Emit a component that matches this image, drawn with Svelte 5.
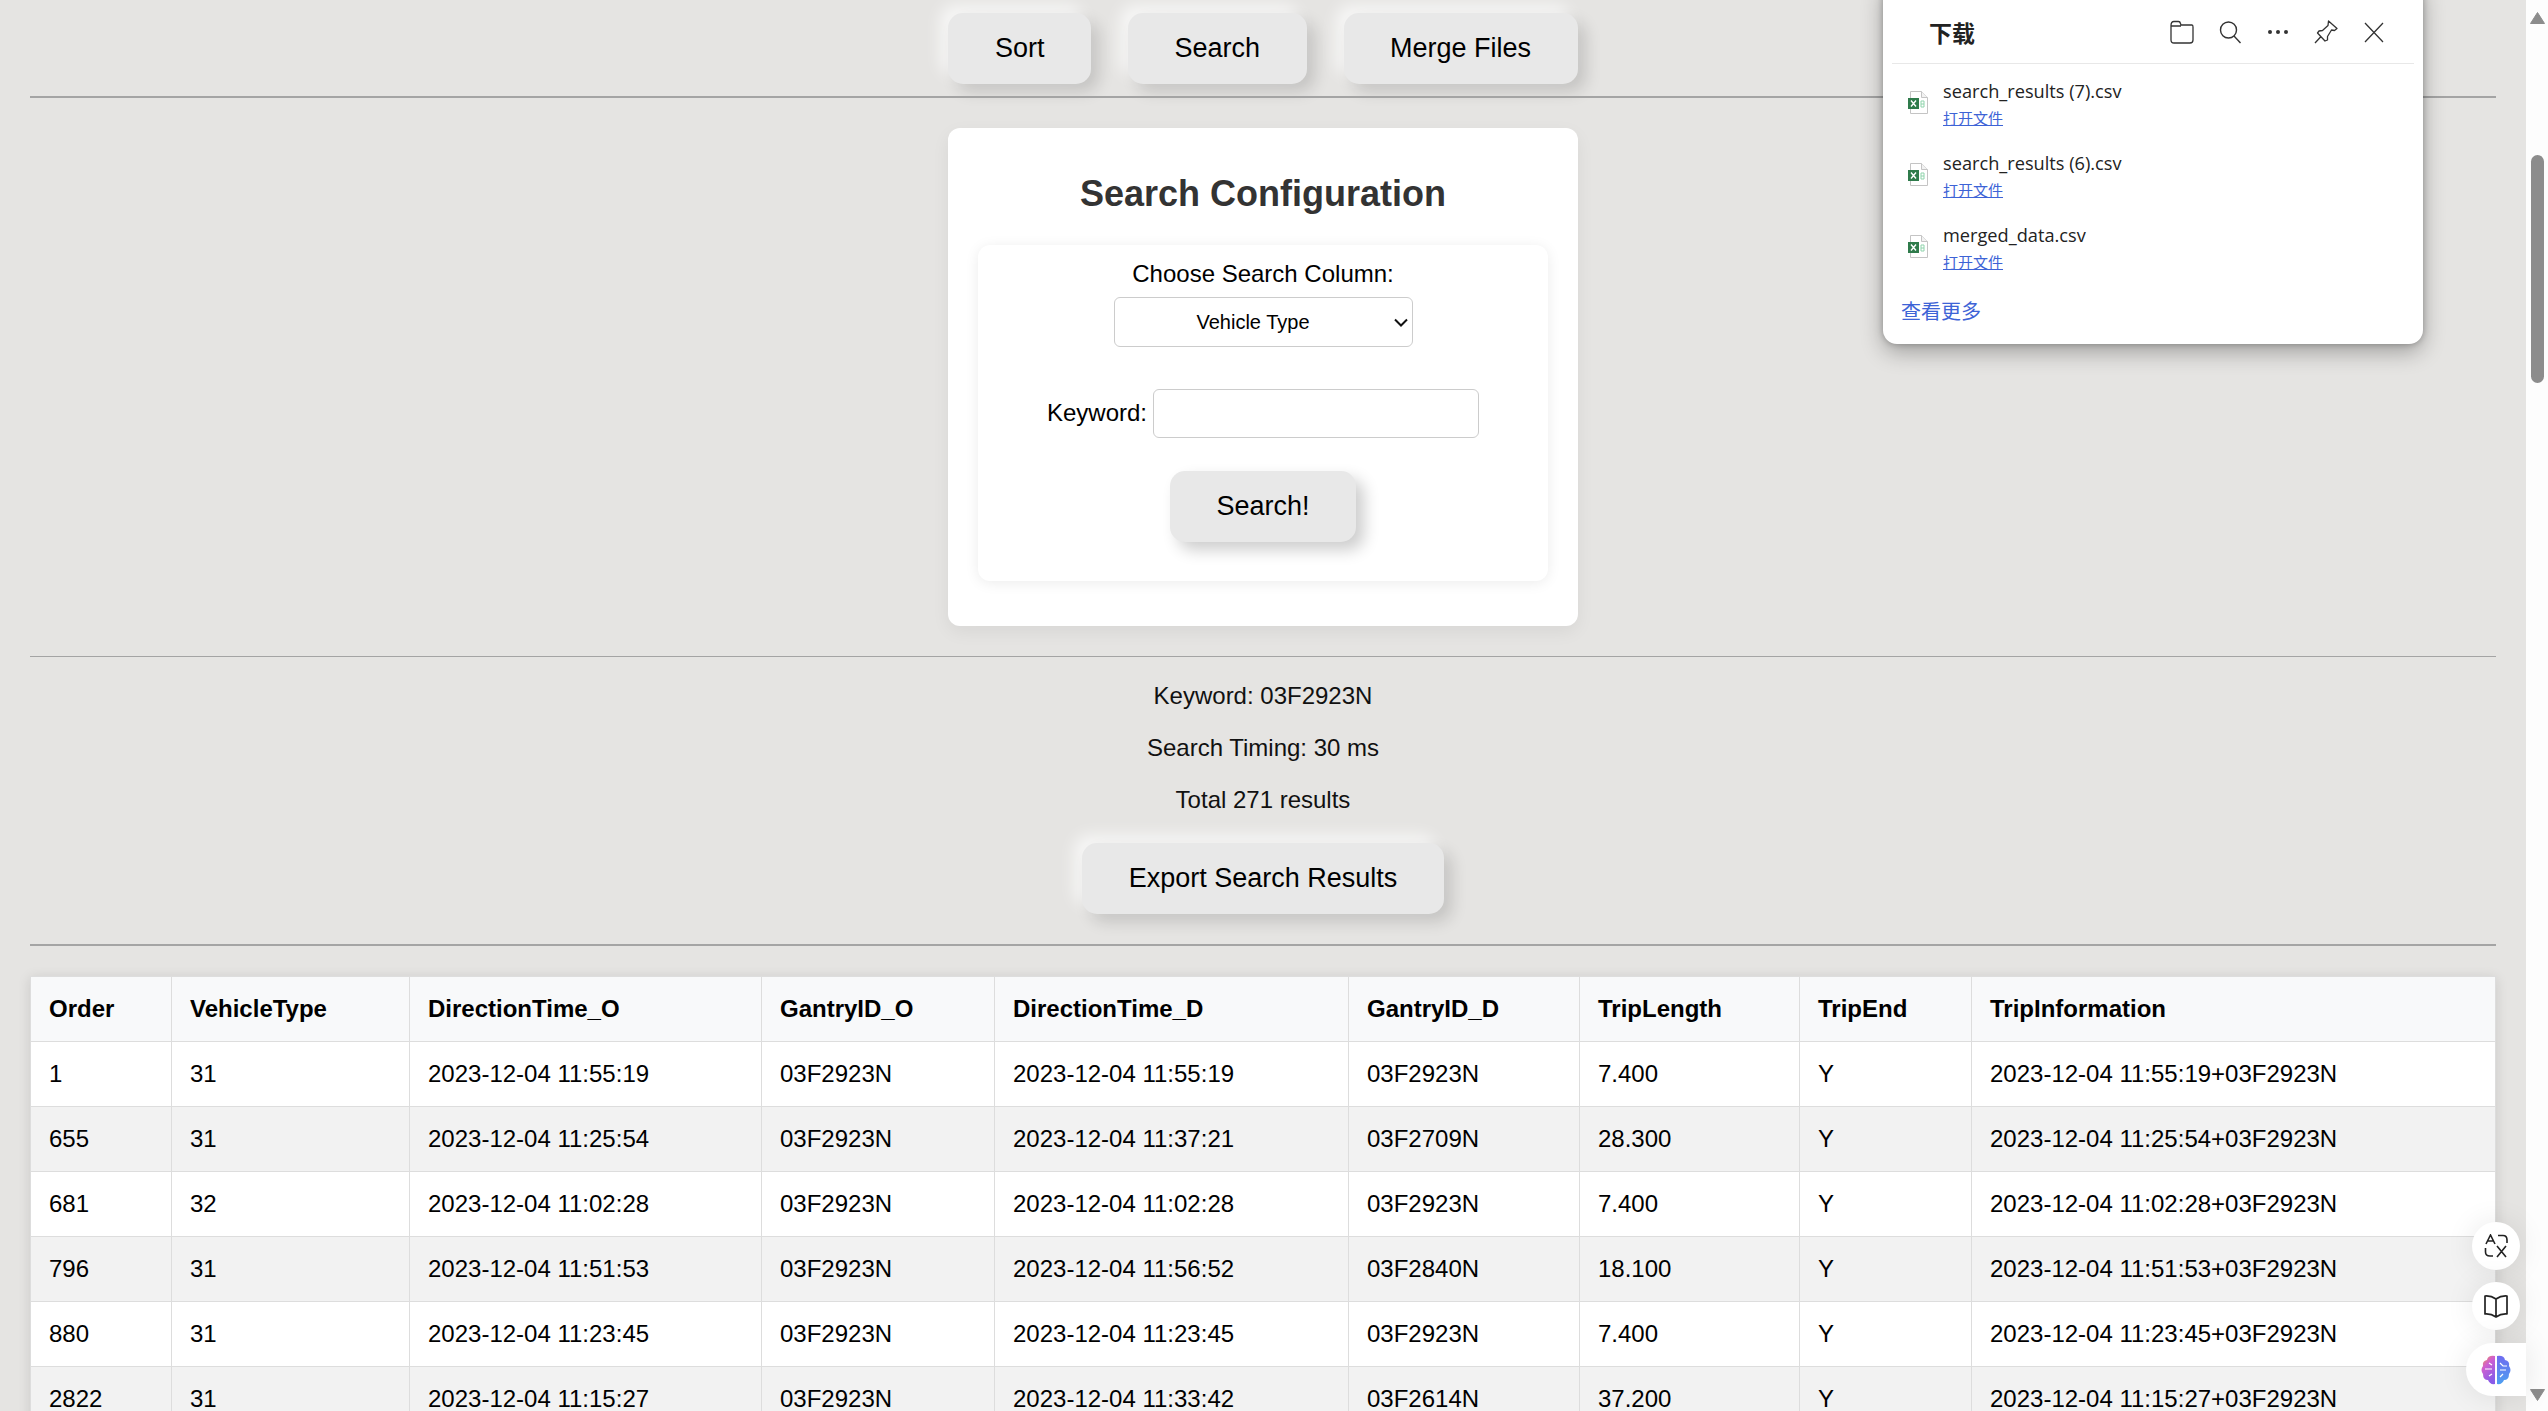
<script>
  const columns = ['Order','VehicleType','DirectionTime_O','GantryID_O','DirectionTime_D','GantryID_D','TripLength','TripEnd','TripInformation'];
  const rows = [
    ['1','31','2023-12-04 11:55:19','03F2923N','2023-12-04 11:55:19','03F2923N','7.400','Y','2023-12-04 11:55:19+03F2923N'],
    ['655','31','2023-12-04 11:25:54','03F2923N','2023-12-04 11:37:21','03F2709N','28.300','Y','2023-12-04 11:25:54+03F2923N'],
    ['681','32','2023-12-04 11:02:28','03F2923N','2023-12-04 11:02:28','03F2923N','7.400','Y','2023-12-04 11:02:28+03F2923N'],
    ['796','31','2023-12-04 11:51:53','03F2923N','2023-12-04 11:56:52','03F2840N','18.100','Y','2023-12-04 11:51:53+03F2923N'],
    ['880','31','2023-12-04 11:23:45','03F2923N','2023-12-04 11:23:45','03F2923N','7.400','Y','2023-12-04 11:23:45+03F2923N'],
    ['2822','31','2023-12-04 11:15:27','03F2923N','2023-12-04 11:33:42','03F2614N','37.200','Y','2023-12-04 11:15:27+03F2923N']
  ];
  const downloads = ['search_results (7).csv','search_results (6).csv','merged_data.csv'];
</script>

<div class="page">
  <main class="content">
    <nav class="tabs">
      <button class="btn">Sort</button>
      <button class="btn">Search</button>
      <button class="btn">Merge Files</button>
    </nav>
    <div class="rule first"></div>

    <section class="card">
      <h2>Search Configuration</h2>
      <div class="inner">
        <label class="col-label" for="col">Choose Search Column:</label>
        <div class="select-wrap">
          <select id="col" class="select">
            <option>Vehicle Type</option>
          </select>
          <svg class="chev" viewBox="0 0 14 9" width="14" height="9" fill="none" stroke="#111" stroke-width="2"><path d="M1 1.5 L7 7.5 L13 1.5"/></svg>
        </div>
        <div class="kw-row">
          <label for="kw">Keyword:</label>
          <input id="kw" class="input" type="text" />
        </div>
        <button class="btn flat">Search!</button>
      </div>
    </section>

    <div class="rule"></div>

    <section class="summary">
      <p>Keyword: 03F2923N</p>
      <p>Search Timing: 30 ms</p>
      <p>Total 271 results</p>
      <button class="btn">Export Search Results</button>
    </section>

    <div class="rule last"></div>

    <table>
      <thead>
        <tr>{#each columns as c}<th>{c}</th>{/each}</tr>
      </thead>
      <tbody>
        {#each rows as r}
          <tr>{#each r as v}<td>{v}</td>{/each}</tr>
        {/each}
      </tbody>
    </table>
  </main>

  <aside class="scrollbar">
    <svg class="arrow" viewBox="0 0 15 12" width="15" height="12"><path d="M7.5 .5 L14.5 11.5 H.5 Z" fill="#8c8c8c" stroke="#8c8c8c" stroke-linejoin="round"/></svg>
    <div class="thumb"></div>
    <svg class="arrow down" viewBox="0 0 15 12" width="15" height="12"><path d="M.5 .5 H14.5 L7.5 11.5 Z" fill="#8c8c8c" stroke="#8c8c8c" stroke-linejoin="round"/></svg>
  </aside>

  <div class="popup">
    <header class="pop-head">
      <strong>下载</strong>
      <div class="pop-icons">
        <svg viewBox="0 0 24 24" width="24" height="24" fill="none" stroke="#333" stroke-width="1.3"><path d="M1 5.5 Q1 1.5 4 1.5 H8.5 Q10 1.5 10.5 3.5 L11 5 H22 Q23 5 23 7 V20 Q23 23 20 23 H4 Q1 23 1 20 Z M1 6 H11"/></svg>
        <svg viewBox="0 0 24 24" width="24" height="24" fill="none" stroke="#333" stroke-width="1.4"><circle cx="10.5" cy="10" r="8"/><path d="M16 16 L22.5 23"/></svg>
        <svg viewBox="0 0 24 24" width="24" height="24" fill="#333"><circle cx="4" cy="12" r="2"/><circle cx="12" cy="12" r="2"/><circle cx="20" cy="12" r="2"/></svg>
        <svg viewBox="0 0 24 24" width="24" height="24" fill="none" stroke="#333" stroke-width="1.3" stroke-linejoin="round"><path d="M14.5 1 L23 8.5 L20.5 10.5 L17.5 10 L13.5 16.5 L13.5 20 L11 21 L3.5 13 L5 11 L8.5 10.5 L14 5.5 Z M7 16.5 L1 23"/></svg>
        <svg viewBox="0 0 24 24" width="24" height="24" fill="none" stroke="#333" stroke-width="1.3"><path d="M3 3 L21 22 M21 3 L3 22"/></svg>
      </div>
    </header>
    <ul class="files">
      {#each downloads as d}
        <li>
          <svg class="xls" viewBox="0 0 20 23" width="20" height="23">
            <path d="M2.5 .5 H13.5 L19.5 6.5 V22.5 H2.5 Z" fill="#fff" stroke="#c4c4c4"/>
            <path d="M13.5 .5 V6.5 H19.5" fill="#f2f2f2" stroke="#c4c4c4"/>
            <rect x="0" y="7" width="11" height="11" fill="#2f7b4b"/>
            <path d="M3 9.5 L8 15.5 M8 9.5 L3 15.5" stroke="#fff" stroke-width="1.4"/>
            <path d="M13 10 H16 V16 H13 Z M13 13 H16" fill="none" stroke="#8fd4ac" stroke-width="1"/>
          </svg>
          <div class="file-text">
            <span class="fname">{d}</span>
            <a href="#open" class="open">打开文件</a>
          </div>
        </li>
      {/each}
    </ul>
    <a href="#more" class="more">查看更多</a>
  </div>

  <div class="fab f1">
    <svg viewBox="0 0 24 24" width="24" height="24" fill="none" stroke="#222" stroke-width="1.6"><path d="M2 10 L6.5 1 L11 10 M3.5 7 H9.5"/><path d="M14 1.5 H19 Q23 1.5 23 6 V9"/><path d="M1.5 14 V18 Q1.5 22 6 22 H9"/><path d="M13 12 L22 23 M22 12 L13 23"/></svg>
  </div>
  <div class="fab f2">
    <svg viewBox="0 0 24 24" width="24" height="24" fill="none" stroke="#222" stroke-width="1.7" stroke-linejoin="round"><path d="M12 5 Q7 1.5 1 2 V20 Q7 19.5 12 23 Q17 19.5 23 20 V2 Q17 1.5 12 5 Z M12 5 V23"/></svg>
  </div>
  <div class="fab pill">
    <svg viewBox="0 0 32 30" width="32" height="30">
      <defs>
        <linearGradient id="bl" x1="0" y1="0" x2="0.5" y2="1"><stop offset="0" stop-color="#f59a3c"/><stop offset=".4" stop-color="#d05fd0"/><stop offset="1" stop-color="#8a5be8"/></linearGradient>
        <linearGradient id="br" x1="0" y1="0" x2="0" y2="1"><stop offset="0" stop-color="#6f6cf0"/><stop offset="1" stop-color="#4e9ff0"/></linearGradient>
      </defs>
      <path d="M15 1 Q8 0 7 5 Q2 6 3 11 Q0 15 3 19 Q3 25 8 25 Q10 30 15 29 Z" fill="url(#bl)"/>
      <path d="M17 1 Q24 0 25 5 Q30 6 29 11 Q32 15 29 19 Q29 25 24 25 Q22 30 17 29 Z" fill="url(#br)"/>
      <path d="M5 14 H12 M9 8 L12 10 M9 21 L12 19 M20 8 L23 11 H27 M20 15 H26 M20 22 L23 19" stroke="#fff" stroke-width="1.2" fill="none"/>
    </svg>
  </div>
</div>

<style>
  :global(body) {
    margin: 0;
    background: #e5e4e2;
    overflow: hidden;
  }
  .page {
    display: flex;
    height: 100vh;
    overflow: hidden;
    position: relative;
    font-family: "Liberation Sans", Arial, sans-serif;
    color: #000;
  }
  .content {
    flex: 1;
    min-width: 0;
    padding: 13px 30px 0;
    display: flex;
    flex-direction: column;
    align-items: center;
    background: #e5e4e2;
  }
  .tabs {
    display: flex;
    gap: 37px;
  }
  .btn {
    font: 27px/31px "Liberation Sans", Arial, sans-serif;
    padding: 20px 46.5px;
    border: none;
    border-radius: 15px;
    background: #e8e8e8;
    color: #000;
    box-shadow: 8px 8px 16px rgba(0, 0, 0, 0.14), -8px -8px 16px rgba(255, 255, 255, 0.7);
  }
  .btn.flat {
    box-shadow: 8px 8px 16px rgba(0, 0, 0, 0.2), -8px -8px 16px rgba(255, 255, 255, 0.7);
  }
  .rule {
    align-self: stretch;
    height: 1.5px;
    background: #a4a4a4;
    margin-top: 30px;
    flex: none;
  }
  .rule.first {
    margin-top: 12px;
  }
  .card {
    width: 630px;
    box-sizing: border-box;
    margin-top: 30px;
    padding: 44px 30px 45px;
    background: #fff;
    border-radius: 12px;
    box-shadow: 0 6px 18px rgba(0, 0, 0, 0.06);
    flex: none;
  }
  h2 {
    margin: 0 0 29px;
    font-size: 36px;
    line-height: 44px;
    font-weight: 700;
    color: #333;
    text-align: center;
  }
  .inner {
    display: flex;
    flex-direction: column;
    align-items: center;
    padding: 15px 0 39px;
    border-radius: 12px;
    background: #fff;
    box-shadow: 0 2px 14px rgba(0, 0, 0, 0.08);
    font-size: 24px;
    line-height: 27px;
  }
  .select-wrap {
    position: relative;
    width: 299px;
    height: 50px;
    margin-top: 10px;
  }
  .select {
    appearance: none;
    display: block;
    width: 100%;
    height: 100%;
    box-sizing: border-box;
    font: 20px "Liberation Sans", Arial, sans-serif;
    text-align: center;
    background: #fff;
    color: #000;
    border: 1.5px solid #ccc;
    border-radius: 6px;
    padding: 0 26px 0 6px;
  }
  .chev {
    position: absolute;
    right: 5px;
    top: 21px;
    pointer-events: none;
  }
  .kw-row {
    display: flex;
    align-items: center;
    gap: 6px;
    margin-top: 42px;
  }
  .kw-row label {
    margin-top: -2px;
  }
  .input {
    width: 326px;
    height: 49px;
    box-sizing: border-box;
    border: 1.5px solid #ccc;
    border-radius: 6px;
    background: #fff;
  }
  .inner .btn {
    margin-top: 33px;
  }
  .summary {
    display: flex;
    flex-direction: column;
    align-items: center;
    font-size: 24px;
    line-height: 27px;
    flex: none;
  }
  .summary p {
    margin: 25px 0 0;
    color: #111;
  }
  .summary .btn {
    margin-top: 30px;
  }
  .rule.last + table {
    margin-top: 30.5px;
  }
  table {
    align-self: stretch;
    flex: none;
    table-layout: fixed;
    border-collapse: collapse;
    background: #fff;
    font-size: 24px;
    line-height: 28px;
    box-shadow: 0 2px 12px rgba(0, 0, 0, 0.12);
  }
  th, td {
    box-sizing: border-box;
    height: 65px;
    padding: 0 18px;
    border: 1.5px solid #ddd;
    text-align: left;
    white-space: nowrap;
    overflow: hidden;
  }
  th {
    background: #f8f9fa;
    font-weight: 700;
  }
  tbody tr:nth-child(even) td {
    background: #f2f2f2;
  }
  th:nth-child(1) { width: 141px; }
  th:nth-child(2) { width: 238px; }
  th:nth-child(3) { width: 352px; }
  th:nth-child(4) { width: 233px; }
  th:nth-child(5) { width: 354px; }
  th:nth-child(6) { width: 231px; }
  th:nth-child(7) { width: 220px; }
  th:nth-child(8) { width: 172px; }

  .scrollbar {
    flex: none;
    width: 22px;
    background: #fdfdfd;
    position: relative;
    display: flex;
    flex-direction: column;
    align-items: center;
  }
  .arrow {
    margin-top: 12px;
    flex: none;
  }
  .thumb {
    width: 13px;
    height: 228px;
    margin-top: 131px;
    background: #8c8c8c;
    border-radius: 7px;
    flex: none;
  }
  .arrow.down {
    margin-top: auto;
    margin-bottom: 10px;
  }

  .popup {
    position: absolute;
    top: -20px;
    left: 1883px;
    width: 540px;
    height: 364px;
    box-sizing: border-box;
    background: #fff;
    border-radius: 14px;
    box-shadow: 0 8px 22px rgba(0, 0, 0, 0.3), 0 0 6px rgba(0, 0, 0, 0.25);
    padding: 20px 9px 0;
    display: flex;
    flex-direction: column;
  }
  .pop-head {
    height: 64px;
    flex: none;
    box-sizing: border-box;
    display: flex;
    align-items: center;
    justify-content: space-between;
    padding: 0 0 0 37px;
    border-bottom: 1.5px solid #e8e8e8;
    color: #222;
  }
  .pop-head strong {
    font: 700 23px "Noto Sans CJK SC", sans-serif;
  }
  .pop-icons {
    display: flex;
    gap: 24px;
    padding-right: 28px;
  }
  .files {
    list-style: none;
    margin: 0;
    padding: 3.5px 0 0;
    display: flex;
    flex-direction: column;
  }
  .files li {
    height: 72px;
    display: flex;
    align-items: center;
    gap: 15px;
    padding-left: 16px;
    margin-top: 0;
  }
  .xls {
    flex: none;
    margin-top: -2px;
  }
  .file-text {
    display: flex;
    flex-direction: column;
  }
  .fname {
    font: 18.2px/24px "Open Sans", "Liberation Sans", sans-serif;
    color: #222;
  }
  .open {
    font: 15px/20px "Noto Sans CJK SC", sans-serif;
    color: #3d63d6;
    text-decoration: underline;
    margin-top: 5px;
  }
  .more {
    font: 20px/28px "Noto Sans CJK SC", sans-serif;
    color: #3d63d6;
    text-decoration: none;
    margin: 13.5px 0 0 9px;
  }

  .fab {
    position: absolute;
    width: 48px;
    height: 48px;
    border-radius: 50%;
    background: #fff;
    box-shadow: 0 0 30px rgba(0, 0, 0, 0.09);
    display: flex;
    align-items: center;
    justify-content: center;
    left: 2472px;
  }
  .f1 { top: 1222px; }
  .f2 { top: 1282px; }
  .pill {
    left: 2466px;
    top: 1343px;
    width: 60px;
    height: 53px;
    border-radius: 27px 0 0 27px;
  }
</style>
